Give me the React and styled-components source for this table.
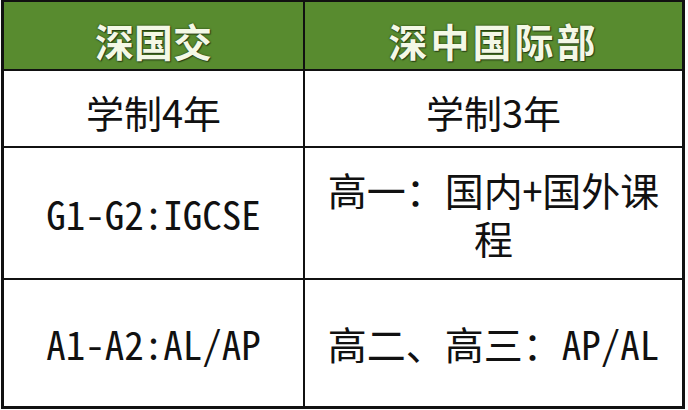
import React from 'react';
import styled, { createGlobalStyle } from 'styled-components';

const GlobalStyle = createGlobalStyle`
  html, body {
    margin: 0;
    padding: 0;
    background: #fff;
  }
`;

const Page = styled.div`
  width: 688px;
  height: 410px;
  padding-left: 1px;
  box-sizing: border-box;
  background: #fdfdfd;
`;

const Table = styled.div`
  display: grid;
  grid-template-columns: 299px 377px;
  grid-template-rows: 67px 75px 130px 126px;
  gap: 2px;
  width: max-content;
  background: #111;
  border: 3px solid #111;
  border-top-width: 2px;
`;

const HeadCell = styled.div`
  display: flex;
  align-items: center;
  justify-content: center;
  padding-top: 8px;
  box-sizing: border-box;
  background: #588b2f;
  color: #f4f8e6;
  font-family: 'Noto Sans CJK SC', sans-serif;
  font-weight: 700;
  font-size: 39px;
  letter-spacing: ${(p) => (p.$wide ? '3px' : '0')};
  text-shadow: 0 0 2px rgba(20, 40, 10, 0.9), 1px 1px 1px rgba(0, 0, 0, 0.5);
`;

const Cell = styled.div`
  display: flex;
  align-items: center;
  justify-content: center;
  text-align: center;
  padding: ${(p) => (p.$low ? '6px 12px 0' : '0 12px')};
  box-sizing: border-box;
  background: #fff;
  color: #111;
  font-family: ${(p) =>
    p.$mono
      ? "'Noto Sans Mono CJK SC', 'Noto Sans CJK SC', 'DejaVu Sans Mono', monospace"
      : "'Noto Sans CJK SC', sans-serif"};
  font-size: ${(p) => (p.$mono ? '39px' : '38px')};
  line-height: 48px;
`;

const rows = [
  { left: '学制4年', right: '学制3年', mono: false },
  { left: 'G1-G2:IGCSE', right: '高一：国内+国外课程', mono: true },
  { left: 'A1-A2:AL/AP', right: '高二、高三：AP/AL', mono: true },
];

export default function App() {
  return (
    <Page>
      <GlobalStyle />
      <Table>
        <HeadCell>深国交</HeadCell>
        <HeadCell $wide>深中国际部</HeadCell>
        {rows.map((row) => (
          <React.Fragment key={row.left}>
            <Cell $mono={row.mono} $low={!row.mono}>
              {row.left}
            </Cell>
            <Cell $mono={row.mono} $low={!row.mono}>
              {row.right}
            </Cell>
          </React.Fragment>
        ))}
      </Table>
    </Page>
  );
}
